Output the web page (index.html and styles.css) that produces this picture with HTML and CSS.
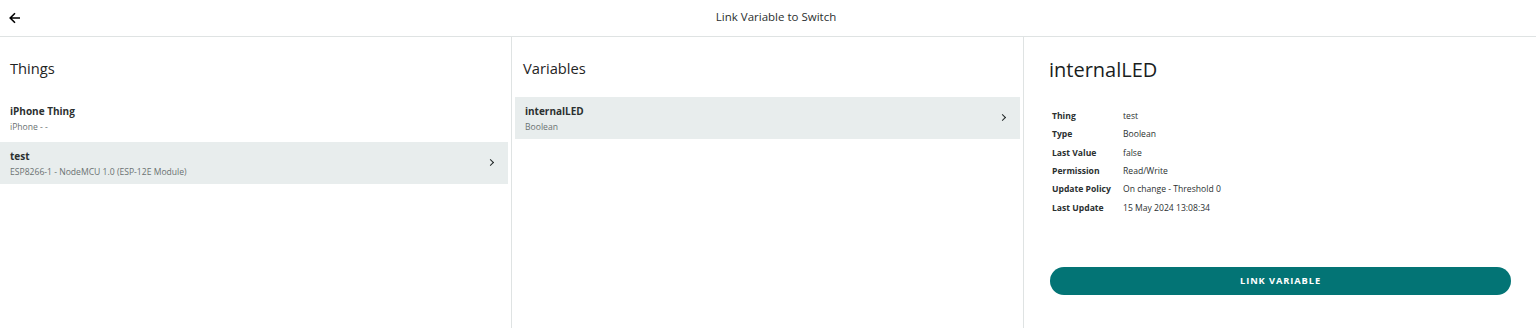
FILE: index.html
```html
<!DOCTYPE html>
<html lang="en">
  <head>
    <meta charset="UTF-8" />
    <meta name="viewport" content="width=device-width, initial-scale=1.0" />
    <title>Link Variable to Switch</title>
    <link rel="stylesheet" href="styles.css">
  </head>
  <body>
    <header class="top-bar">
      <button class="back-button" aria-label="Back">
        <svg width="12" height="12" viewBox="0 0 12 12">
          <path d="M11 6H1.5M6 1.2L1.2 6L6 10.8" fill="none" stroke="#000" stroke-width="1.6" />
        </svg>
      </button>
      <div class="top-title">Link Variable to Switch</div>
    </header>

    <main class="columns">
      <section class="column column-things">
        <h2 class="column-title">Things</h2>
        <div class="list">
          <div class="list-item">
            <div class="item-name">iPhone Thing</div>
            <div class="item-sub">iPhone - -</div>
          </div>
          <div class="list-item selected">
            <div class="item-name">test</div>
            <div class="item-sub">ESP8266-1 - NodeMCU 1.0 (ESP-12E Module)</div>
            <span class="chevron"></span>
          </div>
        </div>
      </section>

      <section class="column column-variables">
        <h2 class="column-title">Variables</h2>
        <div class="list">
          <div class="list-item selected">
            <div class="item-name">internalLED</div>
            <div class="item-sub">Boolean</div>
            <span class="chevron"></span>
          </div>
        </div>
      </section>

      <section class="column column-detail">
        <h1 class="detail-title">internalLED</h1>
        <table class="detail-table">
          <tr><th>Thing</th><td>test</td></tr>
          <tr><th>Type</th><td>Boolean</td></tr>
          <tr><th>Last Value</th><td>false</td></tr>
          <tr><th>Permission</th><td>Read/Write</td></tr>
          <tr><th>Update Policy</th><td>On change - Threshold 0</td></tr>
          <tr><th>Last Update</th><td>15 May 2024 13:08:34</td></tr>
        </table>
        <button class="link-button">LINK VARIABLE</button>
      </section>
    </main>
  </body>
</html>
```

FILE: styles.css
```css
* {
  box-sizing: border-box;
}

body {
  font-family: "Open Sans", "Noto Sans", sans-serif;
  margin: 0;
  padding: 0;
  background: #fff;
  color: #1f2525;
  height: 100vh;
  display: flex;
  flex-direction: column;
  overflow: hidden;
}

.top-bar {
  height: 37px;
  flex: none;
  display: flex;
  align-items: center;
  justify-content: center;
  position: relative;
  padding-left: 16px;
  border-bottom: 1px solid #dfe3e3;
}

.back-button {
  position: absolute;
  left: 9px;
  top: 12px;
  padding: 0;
  border: none;
  background: none;
  width: 12px;
  height: 12px;
  display: flex;
  cursor: pointer;
}

.top-title {
  font-size: 11.5px;
  color: #2b2f2f;
  margin-top: -3px;
}

.columns {
  flex: 1;
  display: grid;
  grid-template-columns: 512px 512px 1fr;
}

.column {
  border-right: 1px solid #dfe3e3;
  display: flex;
  flex-direction: column;
}

.column-detail {
  border-right: none;
  padding: 19px 25px 0 26px;
}

.column-title {
  font-size: 14.7px;
  font-weight: 400;
  margin: 21px 0 0 10px;
  height: 39px;
  color: #1f2525;
}

.column-variables .column-title {
  margin-left: 11px;
}

.list {
  display: flex;
  flex-direction: column;
  gap: 3px;
}

.list-item {
  position: relative;
  height: 42px;
  padding: 6px 10px 0;
  margin-right: 3px;
}

.column-variables .list-item {
  margin-left: 3px;
  margin-right: 3px;
}

.list-item.selected {
  background: #e8eded;
}

.item-name {
  font-size: 10px;
  font-weight: 700;
  color: #2b3030;
  line-height: 16px;
}

.item-sub {
  font-size: 8.6px;
  color: #6b7272;
  line-height: 16px;
}

.chevron {
  position: absolute;
  right: 15px;
  top: 18px;
  width: 5px;
  height: 5px;
  border-right: 1.8px solid #1f2525;
  border-top: 1.8px solid #1f2525;
  transform: rotate(45deg);
}

.detail-title {
  font-size: 20px;
  font-weight: 400;
  margin: 0 0 0 -1px;
  line-height: 28px;
  color: #1a1e1e;
}

.detail-table {
  margin-top: 23px;
  border-collapse: collapse;
  font-size: 8.6px;
}

.detail-table th {
  text-align: left;
  font-weight: 700;
  color: #2b3030;
  width: 73px;
  padding: 0 0 0 2px;
  height: 18.3px;
}

.detail-table td {
  color: #2b3030;
  padding: 0;
}

.link-button {
  margin-top: 50px;
  height: 28px;
  width: 100%;
  border: none;
  border-radius: 14px;
  background: #037475;
  color: #fff;
  font-family: "Open Sans", "Noto Sans", sans-serif;
  font-size: 9.3px;
  font-weight: 700;
  letter-spacing: 0.9px;
  cursor: pointer;
}
```
